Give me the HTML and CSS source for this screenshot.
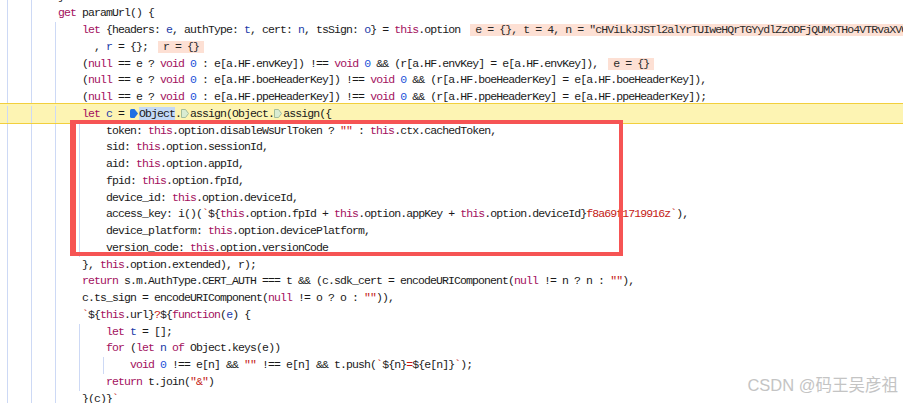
FILE: index.html
```html
<!DOCTYPE html>
<html>
<head>
<meta charset="utf-8">
<link rel="stylesheet" href="styles.css">
</head>
<body>
<div class="editor">
  <div class="code">
    <div class="ln"><i class="g"></i><i class="g"></i><span class="t">}</span></div>
    <div class="ln"><i class="g"></i><i class="g"></i><span class="t"><span class="k">get</span> paramUrl() {</span></div>
    <div class="ln"><i class="g"></i><i class="g"></i><i class="g"></i><span class="t"><span class="k">let</span> {headers: <span class="d">e</span>, authType: <span class="d">t</span>, cert: <span class="d">n</span>, tsSign: <span class="d">o</span>} = <span class="k">this</span>.option<span class="iv">e = {}, t = 4, n = "cHViLkJJSTl2alYrTUIweHQrTGYydlZzODFjQUMxTHo4VTRvaXVCa2RpOEl</span></span></div>
    <div class="ln"><i class="g"></i><i class="g"></i><i class="g"></i><span class="t">  , <span class="d">r</span> = {};<span class="iv">r = {}</span></span></div>
    <div class="ln"><i class="g"></i><i class="g"></i><i class="g"></i><span class="t">(<span class="k">null</span> == e ? <span class="k">void</span> <span class="n">0</span> : e[a.HF.envKey]) !== <span class="k">void</span> <span class="n">0</span> &amp;&amp; (r[a.HF.envKey] = e[a.HF.envKey]),<span class="iv">e = {}</span></span></div>
    <div class="ln"><i class="g"></i><i class="g"></i><i class="g"></i><span class="t">(<span class="k">null</span> == e ? <span class="k">void</span> <span class="n">0</span> : e[a.HF.boeHeaderKey]) !== <span class="k">void</span> <span class="n">0</span> &amp;&amp; (r[a.HF.boeHeaderKey] = e[a.HF.boeHeaderKey]),</span></div>
    <div class="ln"><i class="g"></i><i class="g"></i><i class="g"></i><span class="t">(<span class="k">null</span> == e ? <span class="k">void</span> <span class="n">0</span> : e[a.HF.ppeHeaderKey]) !== <span class="k">void</span> <span class="n">0</span> &amp;&amp; (r[a.HF.ppeHeaderKey] = e[a.HF.ppeHeaderKey]);</span></div>
    <div class="ln paused"><i class="g"></i><i class="g"></i><i class="g"></i><span class="t"><span class="k">let</span> <span class="d">c</span> = <svg class="bp" width="8" height="9" viewBox="0 0 8 9"><path d="M1.5 0 H4.5 L8 4.5 L4.5 9 H1.5 Q0 9 0 7.5 V1.5 Q0 0 1.5 0 Z" fill="#1f6fe3"/></svg><span class="sel">Object</span>.<svg class="bp" width="8" height="9" viewBox="0 0 8 9"><path d="M0.5 0.5 H4.5 L7.5 4.5 L4.5 8.5 H0.5 Z" fill="#d9ecd2" stroke="#a3bd9c"/></svg>assign(Object.<svg class="bp" width="8" height="9" viewBox="0 0 8 9"><path d="M0.5 0.5 H4.5 L7.5 4.5 L4.5 8.5 H0.5 Z" fill="#d9ecd2" stroke="#a3bd9c"/></svg>assign({</span></div>
    <div class="ln"><i class="g"></i><i class="g"></i><i class="g"></i><i class="g"></i><span class="t">token: <span class="k">this</span>.option.disableWsUrlToken ? <span class="s">""</span> : <span class="k">this</span>.ctx.cachedToken,</span></div>
    <div class="ln"><i class="g"></i><i class="g"></i><i class="g"></i><i class="g"></i><span class="t">sid: <span class="k">this</span>.option.sessionId,</span></div>
    <div class="ln"><i class="g"></i><i class="g"></i><i class="g"></i><i class="g"></i><span class="t">aid: <span class="k">this</span>.option.appId,</span></div>
    <div class="ln"><i class="g"></i><i class="g"></i><i class="g"></i><i class="g"></i><span class="t">fpid: <span class="k">this</span>.option.fpId,</span></div>
    <div class="ln"><i class="g"></i><i class="g"></i><i class="g"></i><i class="g"></i><span class="t">device_id: <span class="k">this</span>.option.deviceId,</span></div>
    <div class="ln"><i class="g"></i><i class="g"></i><i class="g"></i><i class="g"></i><span class="t">access_key: i()(<span class="s">`</span>${<span class="k">this</span>.option.fpId + <span class="k">this</span>.option.appKey + <span class="k">this</span>.option.deviceId}<span class="s">f8a69f1719916z`</span>),</span></div>
    <div class="ln"><i class="g"></i><i class="g"></i><i class="g"></i><i class="g"></i><span class="t">device_platform: <span class="k">this</span>.option.devicePlatform,</span></div>
    <div class="ln"><i class="g"></i><i class="g"></i><i class="g"></i><i class="g"></i><span class="t">version_code: <span class="k">this</span>.option.versionCode</span></div>
    <div class="ln"><i class="g"></i><i class="g"></i><i class="g"></i><span class="t">}, <span class="k">this</span>.option.extended), r);</span></div>
    <div class="ln"><i class="g"></i><i class="g"></i><i class="g"></i><span class="t"><span class="k">return</span> s.m.AuthType.CERT_AUTH === t &amp;&amp; (c.sdk_cert = encodeURIComponent(<span class="k">null</span> != n ? n : <span class="s">""</span>),</span></div>
    <div class="ln"><i class="g"></i><i class="g"></i><i class="g"></i><span class="t">c.ts_sign = encodeURIComponent(<span class="k">null</span> != o ? o : <span class="s">""</span>)),</span></div>
    <div class="ln"><i class="g"></i><i class="g"></i><i class="g"></i><span class="t"><span class="s">`</span>${<span class="k">this</span>.url}<span class="s">?</span>${<span class="k">function</span>(<span class="d">e</span>) {</span></div>
    <div class="ln"><i class="g"></i><i class="g"></i><i class="g"></i><i class="g"></i><span class="t"><span class="k">let</span> <span class="d">t</span> = [];</span></div>
    <div class="ln"><i class="g"></i><i class="g"></i><i class="g"></i><i class="g"></i><span class="t"><span class="k">for</span> (<span class="k">let</span> <span class="d">n</span> <span class="k">of</span> Object.keys(e))</span></div>
    <div class="ln"><i class="g"></i><i class="g"></i><i class="g"></i><i class="g"></i><i class="g"></i><span class="t"><span class="k">void</span> <span class="n">0</span> !== e[n] &amp;&amp; <span class="s">""</span> !== e[n] &amp;&amp; t.push(<span class="s">`</span>${n}<span class="s">=</span>${e[n]}<span class="s">`</span>);</span></div>
    <div class="ln"><i class="g"></i><i class="g"></i><i class="g"></i><i class="g"></i><span class="t"><span class="k">return</span> t.join(<span class="s">"&amp;"</span>)</span></div>
    <div class="ln"><i class="g"></i><i class="g"></i><i class="g"></i><span class="t">}(c)}<span class="s">`</span></span></div>
  </div>
  <div class="mark"></div>
  <div class="watermark">CSDN @码王吴彦祖</div>
</div>
</body>
</html>
```
FILE: styles.css
```css
html, body {
  margin: 0;
  padding: 0;
  background: #ffffff;
}
.editor {
  position: relative;
  width: 903px;
  height: 403px;
  overflow: hidden;
}
.code {
  margin-top: -11.5px;
  font-family: "Liberation Mono", monospace;
  font-size: 11.5px;
  letter-spacing: -0.9px;
  color: #1a1a1a;
}
.ln {
  display: flex;
  align-items: center;
  height: 16.75px;
  line-height: 16.75px;
  padding-left: 7px;
  white-space: pre;
  overflow: hidden;
}
.g {
  flex: 0 0 24px;
  align-self: stretch;
  box-sizing: border-box;
  border-left: 1px solid #cdd9f5;
}
.t {
  margin-left: 3px;
}
.k { color: #a3115e; }
.d { color: #1a3aa8; }
.n { color: #2152d9; }
.s { color: #c41a16; }
.iv {
  display: inline-block;
  margin-left: 10px;
  padding: 0 5px;
  line-height: 12px;
  background: #fde0d4;
  color: #2a2a2a;
}
.paused {
  position: relative;
  background: #fdf4b3;
  box-shadow: 0 -2px 0 #fdf4b3, 0 -3px 0 #f2cf3c, 0 1px 0 #f2cf3c;
}
.bp {
  display: inline-block;
  vertical-align: -1px;
  margin-right: 1px;
}
.sel {
  background: #c3d9f7;
}
.mark {
  position: absolute;
  left: 70px;
  top: 120px;
  width: 553px;
  height: 136px;
  box-sizing: border-box;
  border: 4px solid #f65454;
  border-left-width: 6px;
}
.watermark {
  position: absolute;
  right: 5px;
  bottom: 7px;
  font-family: "Liberation Sans", "Noto Sans CJK SC", sans-serif;
  font-size: 16.5px;
  color: #c4c4c4;
  white-space: nowrap;
}
```
